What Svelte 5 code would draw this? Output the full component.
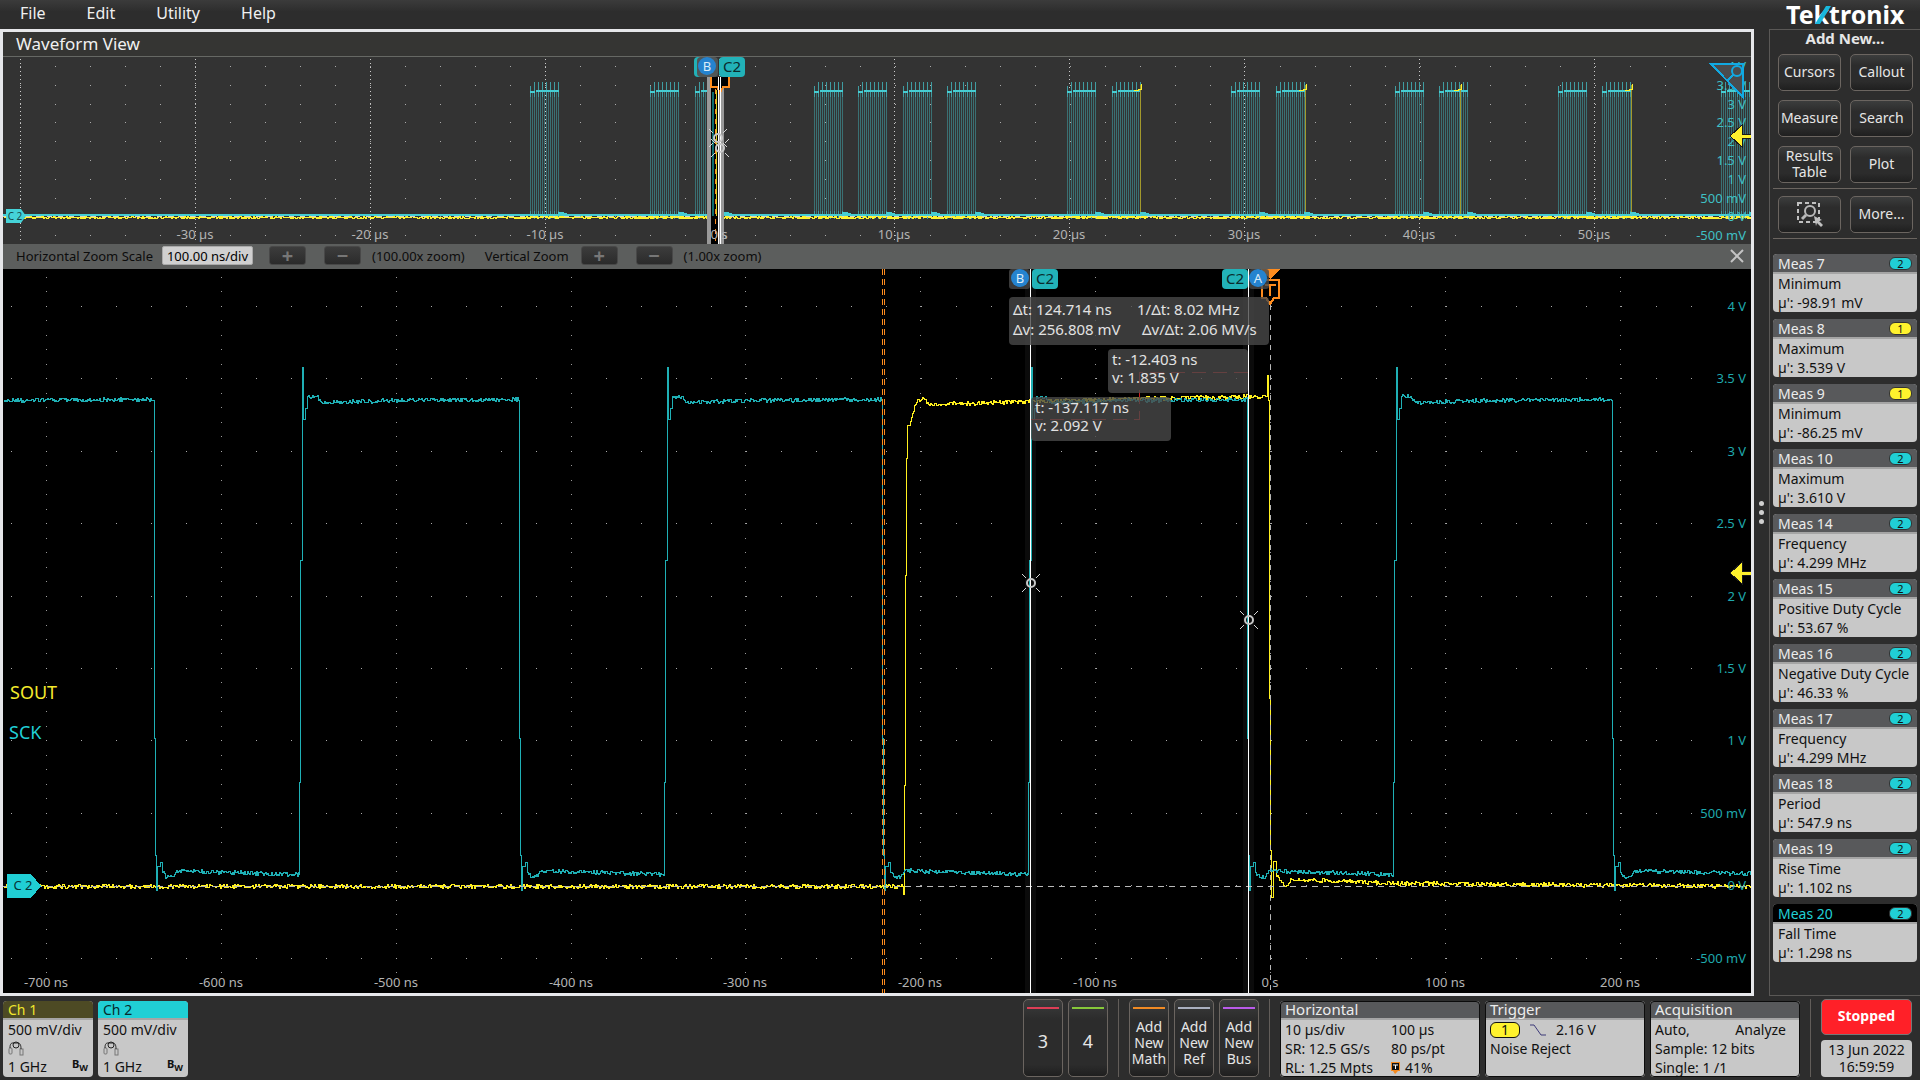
<script lang="ts">
	type Point = [number, number];

	const menus = ['File', 'Edit', 'Utility', 'Help'];
	const addButtons = ['Cursors', 'Callout', 'Measure', 'Search', 'Results Table', 'Plot'];

	const measurements = [
		{ id: 7, name: 'Minimum', value: '-98.91 mV', source: 2 },
		{ id: 8, name: 'Maximum', value: '3.539 V', source: 1 },
		{ id: 9, name: 'Minimum', value: '-86.25 mV', source: 1 },
		{ id: 10, name: 'Maximum', value: '3.610 V', source: 2 },
		{ id: 14, name: 'Frequency', value: '4.299 MHz', source: 2 },
		{ id: 15, name: 'Positive Duty Cycle', value: '53.67 %', source: 2 },
		{ id: 16, name: 'Negative Duty Cycle', value: '46.33 %', source: 2 },
		{ id: 17, name: 'Frequency', value: '4.299 MHz', source: 2 },
		{ id: 18, name: 'Period', value: '547.9 ns', source: 2 },
		{ id: 19, name: 'Rise Time', value: '1.102 ns', source: 2 },
		{ id: 20, name: 'Fall Time', value: '1.298 ns', source: 2 }
	];
	let selected = $state(20);

	const mathButtons = [
		{ label: 'Math', cls: 'math' },
		{ label: 'Ref', cls: 'ref' },
		{ label: 'Bus', cls: 'bus' }
	];

	let zoomScale = $state('100.00 ns/div');

	// small repeatable generator for the trace noise
	let seed = 11;
	function noise(amp: number) {
		seed = (seed * 1103515245 + 12345) % 2147483648;
		return (seed / 2147483648 - 0.5) * 2 * amp;
	}

	// stepped line, one sample per column
	function trace(points: Point[], amp = 2) {
		let d = `M${points[0][0]}.5 ${points[0][1]}.5`;
		for (let i = 1; i < points.length; i++) {
			const [x0, y0] = points[i - 1];
			const [x1, y1] = points[i];
			if (x1 - x0 > 3) {
				for (let x = x0 + 1; x < x1; x++) {
					const y = y0 + ((y1 - y0) * (x - x0)) / (x1 - x0);
					d += `H${x}.5V${Math.round(y + noise(amp))}.5`;
				}
			}
			d += `H${x1}.5V${y1}.5`;
		}
		return d;
	}

	const falls = [154, 519, 882, 1247, 1612];
	const rises = [300, 665, 1029, 1394];
	function clock() {
		const pts: Point[] = [[3, 400]];
		falls.forEach((f, i) => {
			pts.push([f, 399], [f, 738], [f + 1, 855], [f + 2, 890], [f + 3, 866], [f + 6, 862]);
			pts.push([f + 8, 872], [f + 12, 877], [f + 18, 876], [f + 22, 870], [f + 40, 871]);
			const r = rises[i];
			if (r) {
				pts.push([r - 1, 874], [r - 1, 782], [r, 560], [r + 2, 367], [r + 3, 419]);
				pts.push([r + 5, 408], [r + 7, 396], [r + 16, 396], [r + 21, 402], [r + 90, 400]);
			}
		});
		pts.push([1751, 873]);
		return trace(pts);
	}
	const sckPath = clock();
	const soutPath = trace([
		[3, 886], [902, 886], [903, 894], [904, 886], [904, 785], [905, 785], [905, 575], [906, 575],
		[906, 458], [907, 458], [907, 425], [910, 421], [914, 405], [918, 399], [924, 399], [928, 404],
		[1030, 401], [1150, 398], [1265, 396], [1267, 375], [1268, 400], [1269, 698], [1270, 850],
		[1271, 897], [1273, 861], [1276, 876], [1284, 886], [1291, 879], [1400, 883], [1751, 886]
	]);

	const overviewPath = trace([[3, 217], [1751, 217]], 1);
	const bursts = [530, 650, 695, 814, 858, 903, 947, 1067, 1112, 1231, 1276, 1395, 1439, 1558, 1602, 1721];
	const sout = [1140, 1305, 1460, 1631];
	function burstLines(x: number) {
		let d = '';
		for (let i = 0; i < 15; i++) d += `M${x + i * 2}.5 91V217`;
		return d;
	}
	function burstPeaks(x: number) {
		let d = '';
		for (let i = 0; i < 8; i++) d += `M${x + i * 4}.5 ${i ? 82 : 86}V97M${x + i * 4}.5 211V219`;
		return d;
	}

	const steps = (n: number, start = 0) => Array.from({ length: n }, (_, i) => start + i);
	const division = (i: number) => Math.round(i * 174.85);
	const volts = ['4 V', '3.5 V', '3 V', '2.5 V', '2 V', '1.5 V', '1 V', '500 mV', '0 V', '-500 mV'];
	const mainRows = volts.map((label, i) => ({ label, y: Math.round(306 + i * 72.4) }));
	const overviewRows = volts.map((label, i) => ({ label, y: Math.round(66 + i * 18.8) }));
	const mainTimes = steps(10).map((i) => {
		const t = -700 + i * 100;
		return { label: t === 0 ? '0 s' : `${t} ns`, x: 46 + division(i) };
	});
	const overviewTimes = steps(9, 1).map((i) => {
		const t = -40 + i * 10;
		return { label: t === 0 ? '0 s' : `${t} µs`, x: 20 + division(i) };
	});
</script>

{#snippet sight(x: number, y: number)}
	<g class="sight">
		<circle cx={x} cy={y} r="4" />
		<path d="M{x - 9} {y - 9}l4 4M{x + 9} {y - 9}l-4 4M{x - 9} {y + 9}l4 -4M{x + 9} {y + 9}l-4 -4" />
	</g>
{/snippet}

{#snippet tag(x: number, y: number)}
	<rect {x} {y} width="26" height="20" rx="4" fill="#22b2b8" />
	<text class="tag" x={x + 13} y={y + 15}>C2</text>
{/snippet}

{#snippet knob(x: number, y: number, letter: string)}
	<circle cx={x} cy={y} r="9" fill="#2583cf" />
	<text class="knob" {x} y={y + 5}>{letter}</text>
{/snippet}

{#snippet level(y: number)}
	<path d="M1730 {y}L1742 {y - 11}V{y - 2}H1751V{y + 2}H1742V{y + 11}Z" fill="#fff22d" stroke="#1a1a1a" />
{/snippet}

<div class="scope">
	<header>
		<nav>
			{#each menus as menu}
				<button class="menu">{menu}</button>
			{/each}
		</nav>
		<svg class="logo" viewBox="0 0 122 29" role="img" aria-label="Tektronix">
			<text x="1" y="24">Tektronix</text>
			<path d="M30 24L41 6H46L35 24Z" fill="#19b8dc" />
		</svg>
	</header>

	<div class="body">
		<main>
			<h1>Waveform View</h1>
			<svg class="plot overview" viewBox="3 57 1748 187">
				{#each steps(10) as i}
					<path class="column" d="M{20 + division(i)}.5 59V241" />
				{/each}
				{#each overviewRows as row}
					<path class="row" d="M20 {row.y}.5H1700" />
				{/each}
				{#each overviewTimes as t}
					<text class="axis" x={t.x} y="239">{t.label}</text>
				{/each}
				{#each bursts as x}
					<path d={burstLines(x)} stroke="#3a7073" />
					<path d={burstPeaks(x)} stroke="#3f9ca1" />
					<path d="M{x} 92h5m1 -1h23" stroke="#45cdd3" stroke-width="2" />
				{/each}
				{#each sout as x}
					<path d="M{x}.5 85V217" stroke="#a3992c" />
					<path d="M{x - 6} 90h4v-1h3v-5" stroke="#fff22d" fill="none" />
				{/each}
				<path d="M3 215H1751" stroke="#45cdd3" stroke-width="2" />
				{#each bursts as x}
					<path d="M{x + 28} 213h5l5 2" stroke="#45cdd3" stroke-width="2" fill="none" />
				{/each}
				<path d={overviewPath} stroke="#fff22d" fill="none" />
				<path d="M3 216.5H1751" stroke="#d8d8c8" stroke-dasharray="5 6" />
				{#each bursts as x}
					<path d="M{x - 16} 218h12m4 -1h3m2 0h3m2 0h3m2 0h3m2 0h3m2 0h3m2 0h4" stroke="#fff22d" stroke-width="2" />
				{/each}
				{#each overviewRows as row}
					<text class="volt small" x="1746" y={row.y + 5}>{row.label}</text>
				{/each}

				<rect x="707" y="77" width="17" height="167" fill="#999" />
				<rect x="711" y="77" width="7" height="167" fill="#000" />
				<path d="M712.5 92V216" stroke="#0f6b6f" stroke-width="2" />
				<path d="M716.5 90V216" stroke="#d9cf25" />
				<path d="M715.5 79V241" stroke="#ff8c1e" stroke-dasharray="5 5" />
				<path d="M711 77V87H717L720 93L723 87H729V77" fill="#000" stroke="#ff8c1e" stroke-width="2" />
				<path d="M718.5 77V244M720.5 77V244" stroke="#fff" />
				<text class="axis" x="719" y="239">0 s</text>
				{@render sight(718, 138)}
				{@render sight(720, 148)}
				<rect x="694" y="57" width="20" height="20" rx="4" fill="#22b2b8" />
				<rect x="697" y="57" width="21" height="20" rx="4" fill="#505657" />
				{@render knob(707, 66, 'B')}
				{@render tag(719, 57)}
				{@render level(136)}
				<path d="M1711 64H1743V97Z" fill="#4a4c4e" stroke="#11a9e2" stroke-width="2" />
				<g class="lens">
					<circle cx="1737" cy="71" r="5" />
					<path d="M1733 75L1727 81" />
				</g>
			</svg>

			<div class="zoombar">
				<label for="hscale">Horizontal Zoom Scale</label>
				<input id="hscale" bind:value={zoomScale} />
				<button class="step" aria-label="Increase horizontal zoom">+</button>
				<button class="step" aria-label="Decrease horizontal zoom">−</button>
				<span class="factor">(100.00x zoom)</span>
				<span class="vertical">Vertical Zoom</span>
				<button class="step" aria-label="Increase vertical zoom">+</button>
				<button class="step" aria-label="Decrease vertical zoom">−</button>
				<span class="factor">(1.00x zoom)</span>
				<button class="close" aria-label="Close zoom">
					<svg viewBox="0 0 14 14"><path d="M1 1L13 13M13 1L1 13" stroke="#c4c4c4" stroke-width="2" /></svg>
				</button>
			</div>

			<svg class="plot" viewBox="3 269 1748 724">
				<rect x="3" y="269" width="1748" height="724" fill="#000" />
				{#each mainTimes as t}
					<path class="column wide" d="M{t.x}.5 277V975" />
				{/each}
				{#each mainRows as row}
					<path class="row" d="M11 {row.y}.5H1700" />
				{/each}
				{#each mainTimes as t}
					<text class="axis" x={t.x} y="987">{t.label}</text>
				{/each}
				<path d="M1025 269h11v724h-11zM1243 269h11v724h-11z" fill="#0b0b0b" />

				<text class="name sout" x="10" y="699">SOUT</text>
				<text class="name sck" x="9" y="739">SCK</text>

				<path class="wave" d={soutPath} stroke="#fff01e" />
				<path class="wave" d={sckPath} stroke="#1fb0b5" />
				<path d="M3 886.5H1751" stroke="#b9b9b9" stroke-dasharray="6 5" />
				<path d="M1270.5 305V993" stroke="#b9b9b9" stroke-dasharray="5 5" />
				<path d="M882.5 269V993M884.5 269V993" stroke="#ff8c1e" stroke-dasharray="6 4" />
				{#each mainRows as row}
					<text class="volt" x="1746" y={row.y + 5}>{row.label}</text>
				{/each}

				<path d="M1248 372.5H1139.5V419.5H1031" fill="none" stroke="#d02020" stroke-dasharray="14 7" />
				<path d="M1261 269H1280L1270 279Z" fill="#ff8c1e" />
				<path d="M1262 280H1279V298H1274L1270 304L1266 298H1262Z" fill="#000" stroke="#ff8c1e" stroke-width="2" />
				<path d="M1265 285H1276M1270 285V296" stroke="#ff8c1e" stroke-width="2" />
				<path d="M1030.5 269V993M1248.5 269V993" stroke="#fff" />

				<g fill="#484848" fill-opacity="0.8">
					<rect x="1009" y="269" width="21" height="20" rx="3" />
					<rect x="1249" y="269" width="20" height="20" rx="3" />
					<rect x="1009" y="297" width="260" height="48" rx="4" />
					<rect x="1108" y="349" width="140" height="44" rx="4" />
					<rect x="1031" y="397" width="140" height="44" rx="4" />
				</g>
				<g class="readout">
					<text x="1013" y="315">Δt: 124.714 ns</text>
					<text x="1137" y="315">1/Δt: 8.02 MHz</text>
					<text x="1013" y="335">Δv: 256.808 mV</text>
					<text x="1142" y="335">Δv/Δt: 2.06 MV/s</text>
					<text x="1112" y="365">t: -12.403 ns</text>
					<text x="1112" y="383">v: 1.835 V</text>
					<text x="1035" y="413">t: -137.117 ns</text>
					<text x="1035" y="431">v: 2.092 V</text>
				</g>
				{@render knob(1020, 278, 'B')}
				{@render tag(1032, 269)}
				{@render tag(1222, 269)}
				{@render knob(1258, 278, 'A')}
				{@render sight(1031, 583)}
				{@render sight(1249, 620)}
				{@render level(573)}
				<path d="M7 874H31L41 886L31 898H7Z" fill="#20cfd5" />
				<text class="flag" x="23" y="890">C 2</text>
			</svg>
			<svg class="mark" viewBox="0 0 20 14">
				<path d="M0 0H15L20 7L15 14H0Z" fill="#45d3d8" />
				<text x="9" y="11">C 2</text>
			</svg>
		</main>

		<div class="handle" aria-hidden="true"><i></i><i></i><i></i></div>

		<aside>
			<h2>Add New...</h2>
			<div class="grid">
				{#each addButtons as label}
					<button class="tool">{label}</button>
				{/each}
			</div>
			<hr />
			<div class="grid">
				<button class="tool" aria-label="Zoom select">
					<svg viewBox="0 0 28 26">
						<rect x="2" y="2" width="21" height="19" fill="none" stroke="#c0c0c0" stroke-width="2" stroke-dasharray="4 3" />
						<circle cx="14" cy="10" r="5" fill="none" stroke="#b8b8b8" stroke-width="2" />
						<path d="M10 14L6 18" stroke="#b8b8b8" stroke-width="3" />
						<path d="M18 15L26 19L23 20L27 24L25 26L21 22L20 25Z" fill="#c0c0c0" />
					</svg>
				</button>
				<button class="tool">More...</button>
			</div>
			<hr />
			<div class="measurements">
				{#each measurements as m}
					<button class="card meas" class:active={selected === m.id} onclick={() => (selected = m.id)}>
						<span class="head">Meas {m.id}<span class="pill ch{m.source}">{m.source}</span></span>
						<span class="line">{m.name}</span>
						<span class="line">µ': {m.value}</span>
					</button>
				{/each}
			</div>
		</aside>
	</div>

	<footer>
		<div class="group">
			{#each [1, 2] as ch}
				<button class="card channel">
					<span class="head c{ch}">Ch {ch}</span>
					<span class="line">500 mV/div</span>
					<span class="line">
						<svg class="probe" viewBox="0 0 16 16" fill="none" stroke="#222">
							<rect x="1" y="8" width="3" height="6" rx="1" stroke="#777" />
							<rect x="12" y="9" width="3" height="6" stroke="#777" />
							<path d="M2 8C2 4 3 3 5 3H10C12 3 13 5 13 9" />
							<circle cx="8" cy="5" r="3" />
						</svg>
					</span>
					<span class="line split">1 GHz<b class="bw">B<sub>W</sub></b></span>
				</button>
			{/each}
		</div>
		<div class="group slots">
			<button class="slot big s3">3</button>
			<button class="slot big s4">4</button>
		</div>
		<div class="bar"></div>
		<div class="group">
			{#each mathButtons as b}
				<button class="slot {b.cls}">Add New {b.label}</button>
			{/each}
		</div>
		<div class="bar"></div>
		<div class="group">
			<button class="card info horizontal">
				<span class="head">Horizontal</span>
				<span class="cells">
					<span>10 µs/div</span><span>100 µs</span>
					<span>SR: 12.5 GS/s</span><span>80 ps/pt</span>
					<span>RL: 1.25 Mpts</span>
					<span class="position">
						<svg class="trig" viewBox="0 0 9 12">
							<path d="M0 0H9V9H7L4 12L2 9H0Z" fill="#f58a1f" />
							<path d="M1 1H8V8H1Z" fill="#111" />
							<path d="M2 3H7M4.5 3V7" stroke="#fff" />
						</svg>
						41%
					</span>
				</span>
			</button>
			<button class="card info trigger">
				<span class="head">Trigger</span>
				<span class="line level">
					<span class="source">1</span>
					<svg class="slope" viewBox="0 0 16 12"><path d="M0 1H4L11 11H16" fill="none" stroke="#3c3a78" /></svg>
					2.16 V
				</span>
				<span class="line">Noise Reject</span>
			</button>
			<button class="card info acquisition">
				<span class="head">Acquisition</span>
				<span class="line split">Auto,<span>Analyze</span></span>
				<span class="line">Sample: 12 bits</span>
				<span class="line">Single: 1 /1</span>
			</button>
		</div>
		<div class="bar"></div>
		<div class="run">
			<button class="stopped">Stopped</button>
			<button class="date">13 Jun 2022<br />16:59:59</button>
		</div>
	</footer>
</div>

<style>
	:global(body) {
		background: #2d2d2d;
	}
	.scope {
		display: flex;
		flex-direction: column;
		min-height: 100vh;
		background: #2d2d2d;
		color: #e6e6e6;
		font-family: 'Noto Sans', sans-serif;
		font-size: 14px;
	}
	.scope * {
		box-sizing: border-box;
	}
	button,
	input {
		font: inherit;
		color: inherit;
		padding: 0;
		margin: 0;
		border: 0;
		background: none;
	}
	svg {
		display: block;
	}
	header {
		display: flex;
		justify-content: space-between;
		height: 29px;
		padding: 0 13px 0 4px;
		background: linear-gradient(#3b3b3b, #2d2d2d 40%);
	}
	nav {
		display: flex;
		gap: 9px;
	}
	.menu {
		padding: 0 16px;
		height: 26px;
		font-size: 16px;
		color: #f0f0f0;
	}
	.logo {
		width: 122px;
		height: 29px;
		overflow: visible;
	}
	.logo text {
		font-size: 25px;
		font-weight: 700;
		fill: #fff;
	}
	.body {
		display: grid;
		grid-template-columns: minmax(0, 1fr) 15px 151px;
		flex: 1;
	}
	main {
		position: relative;
		border: 3px solid #e6e7ea;
		background: #333;
	}
	h1 {
		margin: 0;
		padding-left: 13px;
		font-size: 17px;
		font-weight: 400;
		line-height: 24px;
		background: #353533;
		border-bottom: 1px solid #666864;
		color: #f0f0f0;
	}
	.plot {
		width: 100%;
		height: auto;
		shape-rendering: crispEdges;
	}
	.overview {
		background: #333;
	}
	.column {
		stroke: #ccc;
		stroke-dasharray: 1 3;
	}
	/* five dots to each vertical division */
	.column.wide {
		stroke: #999;
		stroke-dasharray: 1 13.48;
	}
	.row {
		stroke: #aaa;
		stroke-dasharray: 1 34;
	}
	.wave {
		fill: none;
	}
	.axis {
		font-size: 13px;
		text-anchor: middle;
		fill: #b4b4b4;
	}
	.volt {
		font-size: 13px;
		text-anchor: end;
		fill: #1fa9ad;
	}
	.volt.small {
		fill: #3fc0c5;
	}
	.name {
		font-size: 18px;
	}
	.name.sout {
		fill: #f4ea2c;
	}
	.name.sck {
		fill: #20cfd5;
	}
	.readout {
		font-size: 15px;
		fill: #e2e2e2;
	}
	.sight {
		fill: none;
		stroke: #d5d5d5;
	}
	.sight circle {
		stroke: #c8c8c8;
		stroke-width: 2;
	}
	.sight path {
		shape-rendering: auto;
	}
	.lens {
		fill: none;
		stroke: #11a9e2;
		stroke-width: 2;
	}
	circle,
	rect {
		shape-rendering: auto;
	}
	.tag {
		font-size: 15px;
		text-anchor: middle;
		fill: #0a2b2d;
	}
	.knob {
		font-size: 13px;
		text-anchor: middle;
		fill: #dcecf8;
	}
	.flag {
		font-size: 13px;
		text-anchor: middle;
		fill: #063436;
	}
	.mark {
		position: absolute;
		left: 3px;
		top: 177px;
		width: 20px;
	}
	.mark text {
		font-size: 10px;
		text-anchor: middle;
		fill: #16494b;
	}
	.zoombar {
		display: flex;
		align-items: center;
		height: 25px;
		padding: 0 5px 2px 13px;
		background: #5c5e5d;
		color: #0c0c0c;
		font-size: 13px;
	}
	.zoombar label {
		width: 146px;
	}
	.zoombar input {
		width: 91px;
		height: 19px;
		margin-right: 16px;
		border: 1px solid #aaa;
		border-radius: 2px;
		background: #d0d0d0;
		color: #000;
		text-align: center;
	}
	.step {
		width: 37px;
		height: 19px;
		margin-right: 18px;
		border: 1px solid #484848;
		border-radius: 3px;
		background: linear-gradient(#3c3c3c, #2b2b2b);
		color: #777;
		font-size: 20px;
		font-weight: 700;
		line-height: 15px;
	}
	.step + .step {
		margin-right: 11px;
	}
	.vertical {
		margin: 0 12px 0 20px;
	}
	.close {
		margin-left: auto;
		padding: 2px;
	}
	.close svg {
		width: 14px;
	}
	.handle {
		display: flex;
		flex-direction: column;
		align-items: center;
		justify-content: center;
		gap: 4px;
	}
	.handle i {
		width: 5px;
		height: 5px;
		border-radius: 50%;
		background: #d0d0d0;
	}
	aside {
		border: solid #5a5856;
		border-width: 1px 0 1px 1px;
		padding: 0 3px;
	}
	h2 {
		margin: 0;
		padding: 0 0 8px;
		font-size: 15px;
		font-weight: 700;
		line-height: 16px;
		text-align: center;
	}
	.grid {
		display: grid;
		grid-template-columns: 1fr 1fr;
		gap: 9px;
		padding: 0 4px 0 5px;
	}
	.tool {
		display: flex;
		align-items: center;
		justify-content: center;
		height: 37px;
		padding-bottom: 2px;
		border: 1px solid #6b6560;
		border-radius: 5px;
		background: linear-gradient(#3c3d3d, #2c2c2c 30%, #2c2c2c 75%, #1f1f1f);
		line-height: 16px;
	}
	.tool svg {
		width: 28px;
	}
	hr {
		margin: 5px 0 7px;
		border: 0;
		border-top: 1px solid #6b6560;
	}
	.measurements {
		display: flex;
		flex-direction: column;
		gap: 7px;
		padding-top: 8px;
	}
	.card {
		display: flex;
		flex-direction: column;
		overflow: hidden;
		border-radius: 4px;
		background: #c8c8c8;
		color: #111;
		text-align: left;
		line-height: 19px;
	}
	.head {
		display: flex;
		justify-content: space-between;
		align-items: center;
		height: 20px;
		padding: 0 5px;
		background: #58595b;
		border-bottom: 2px solid #a5a5a5;
		color: #ececec;
		flex: none;
	}
	.line {
		padding: 0 5px;
		white-space: nowrap;
	}
	.meas {
		height: 58px;
	}
	.meas.active .head {
		background: #000;
		color: #20cfd5;
	}
	.pill {
		width: 23px;
		height: 13px;
		border: 1px solid #333;
		border-radius: 6px;
		color: #111;
		font-size: 11px;
		line-height: 11px;
		text-align: center;
	}
	.ch1 {
		background: #fff22d;
	}
	.ch2 {
		background: #20cfd5;
	}
	footer {
		display: flex;
		align-items: flex-end;
		gap: 10px;
		height: 84px;
		padding: 0 8px 3px 3px;
	}
	.group {
		display: flex;
		align-items: flex-end;
		gap: 5px;
	}
	.slots {
		margin-left: auto;
	}
	.channel {
		width: 90px;
		height: 76px;
	}
	.channel .head,
	.info .head {
		height: 19px;
	}
	.head.c1 {
		background: #4d4a24;
		color: #f0e62c;
	}
	.head.c2 {
		background: #20cfd5;
		color: #062a2c;
	}
	.probe {
		width: 16px;
		height: 18px;
	}
	.split {
		display: flex;
		justify-content: space-between;
	}
	.bw {
		font-size: 11px;
		line-height: 14px;
	}
	.bw sub {
		font-size: 9px;
	}
	.slot {
		width: 40px;
		height: 78px;
		padding-top: 10px;
		border: 1px solid #6b6560;
		border-radius: 5px;
		background: linear-gradient(#3c3d3d, #2c2c2c 25%, #2c2c2c 85%, #1f1f1f);
		line-height: 16px;
		position: relative;
	}
	.slot.big {
		padding-top: 6px;
		font-size: 18px;
	}
	.slot::before {
		content: '';
		position: absolute;
		top: 7px;
		left: 3px;
		right: 3px;
		height: 2px;
		background: var(--strip);
	}
	.s3 {
		--strip: #dd3e56;
	}
	.s4 {
		--strip: #86c83a;
	}
	.math {
		--strip: #f08a24;
	}
	.ref {
		--strip: #aab0c0;
	}
	.bus {
		--strip: #b95bea;
	}
	.bar {
		width: 1px;
		height: 78px;
		background: #625d59;
	}
	.info {
		height: 76px;
		outline: 1px solid #0c0c0c;
		outline-offset: -1px;
	}
	.info .head {
		font-size: 15px;
	}
	.horizontal {
		width: 200px;
	}
	.trigger {
		width: 160px;
	}
	.acquisition {
		width: 150px;
	}
	.cells {
		display: grid;
		grid-template-columns: 106px 1fr;
		padding: 0 5px;
	}
	.position {
		display: flex;
		align-items: center;
		gap: 5px;
	}
	.trig {
		width: 9px;
	}
	.level {
		display: flex;
		align-items: center;
	}
	.source {
		width: 30px;
		height: 16px;
		margin-right: 10px;
		border: 1px solid #111;
		border-radius: 6px;
		background: #fff22d;
		line-height: 14px;
		text-align: center;
	}
	.slope {
		width: 16px;
		margin-right: 10px;
	}
	.acquisition .split {
		padding-right: 14px;
	}
	.run {
		display: flex;
		flex-direction: column;
		gap: 5px;
		width: 91px;
	}
	.stopped {
		height: 36px;
		padding-bottom: 3px;
		border: 1px solid #777;
		border-radius: 5px;
		background: #ff2028;
		color: #fff;
		font-weight: 700;
	}
	.date {
		height: 37px;
		padding-bottom: 2px;
		border-radius: 4px;
		background: #c8c8c8;
		color: #111;
		line-height: 17px;
	}
</style>
